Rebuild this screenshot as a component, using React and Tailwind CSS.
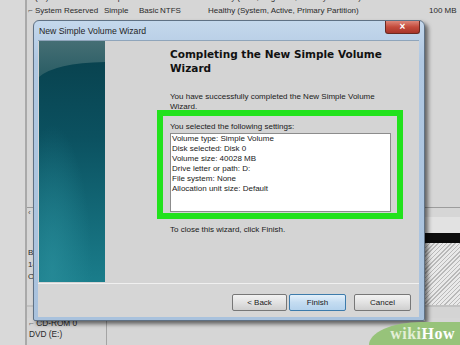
import React from 'react';

const settings = [
  'Volume type: Simple Volume',
  'Disk selected: Disk 0',
  'Volume size: 40028 MB',
  'Drive letter or path: D:',
  'File system: None',
  'Allocation unit size: Default',
];

const TealPanel = () => (
  <svg className="block" width="66" height="241" viewBox="0 0 66 241" preserveAspectRatio="none">
    <defs>
      <linearGradient id="tealG" x1="0" y1="0" x2="0" y2="1">
        <stop offset="0" stopColor="#083f4b" />
        <stop offset="0.4" stopColor="#0b5160" />
        <stop offset="1" stopColor="#1a7d8b" />
      </linearGradient>
      <linearGradient id="topG" x1="0" y1="0" x2="0" y2="1">
        <stop offset="0" stopColor="#456e74" />
        <stop offset="1" stopColor="#295c64" />
      </linearGradient>
      <radialGradient id="glowG" cx="0.2" cy="0.95" r="0.6">
        <stop offset="0" stopColor="#2a8e9b" stopOpacity="0.7" />
        <stop offset="1" stopColor="#2a8e9b" stopOpacity="0" />
      </radialGradient>
    </defs>
    <rect width="66" height="241" fill="url(#tealG)" />
    <rect width="66" height="241" fill="url(#glowG)" />
    <path d="M0 36 Q16 22 66 21 L66 0 L0 0Z" fill="url(#topG)" />
  </svg>
);

const WinButton = ({ children, primary, className = '' }) => (
  <div
    className={`h-[17px] flex items-center justify-center rounded-[2px] border text-[8px] leading-none text-[#1a1a1a] ${
      primary
        ? 'border-[#3d7bab] bg-[linear-gradient(#e3f0fb,#c4dcf1_50%,#b4d2ec)]'
        : 'border-[#777777] bg-[linear-gradient(#f2f2f2,#e2e2e2_50%,#cfcfcf)]'
    } ${className}`}
  >
    {children}
  </div>
);

export default function App() {
  return (
    <div className="relative w-[460px] h-[345px] overflow-hidden flex bg-[#d6d6d6] text-[#2a2a2a] font-['Liberation_Sans',Arial,sans-serif]">
      {/* left strip of the window behind */}
      <div className="w-[27px] shrink-0 bg-[#d9d9d9] border-r-2 border-[#a9a9a9]" />

      {/* disk management behind the dialog */}
      <div className="flex-1 flex flex-col">
        <div className="h-[3px] shrink-0 overflow-hidden">
          <div className="-mt-[8px] flex whitespace-nowrap text-[8px] leading-[11px] pl-[8px]">
            <span className="w-[69px] shrink-0">(C:)</span>
            <span className="w-[35px] shrink-0">Simple</span>
            <span className="w-[21px] shrink-0">Basic</span>
            <span className="w-[48px] shrink-0">NTFS</span>
            <span className="w-[221px] shrink-0">Healthy (Boot, Page File, Primary Partition)</span>
            <span className="shrink-0">39 GB</span>
          </div>
        </div>
        <div className="h-[15px] shrink-0 flex items-center whitespace-nowrap text-[8px] leading-none">
          <span className="w-[8px] shrink-0 pl-[1px] text-[#777777]">⌐</span>
          <span className="w-[69px] shrink-0">System Reserved</span>
          <span className="w-[35px] shrink-0">Simple</span>
          <span className="w-[21px] shrink-0">Basic</span>
          <span className="w-[48px] shrink-0">NTFS</span>
          <span className="w-[221px] shrink-0">Healthy (System, Active, Primary Partition)</span>
          <span className="shrink-0">100 MB</span>
        </div>
        <div className="flex-1" />
        <div className="h-[10px] shrink-0 border-t border-[#9c9c9c] flex items-center pl-[1px] text-[8px] leading-none text-[#555555]">‹</div>
        <div className="h-[88px] shrink-0 flex">
          <div className="w-[79px] flex flex-col pt-[30px] pl-[1px] text-[8px] leading-[12px] whitespace-nowrap">
            <span>Basic</span>
            <span>14.65 GB</span>
            <span>Online</span>
          </div>
          <div className="flex-1 flex flex-col border-l border-[#9c9c9c]">
            <div className="h-[16px] bg-[#e2e2e2]" />
            <div className="h-[10px] bg-[#0c0c0c]" />
            <div className="flex-1 bg-[repeating-linear-gradient(135deg,#b9b9b9_0px,#b9b9b9_1px,#e9e9e9_1px,#e9e9e9_3px)]" />
          </div>
        </div>
        <div className="h-[13px] shrink-0 border-t-2 border-[#c2c2c2] bg-[#d4d4d4]" />
        <div className="h-[27px] shrink-0 flex">
          <div className="w-[79px] flex flex-col pl-[2px] text-[8.3px] leading-[11px] whitespace-nowrap">
            <span>
              <span className="text-[#777777]">⌐</span> CD-ROM 0
            </span>
            <span>DVD (E:)</span>
          </div>
          <div className="flex-1 border-l border-[#a4a4a4]" />
        </div>
      </div>

      {/* wizard window */}
      <div className="absolute left-[33px] top-[20px] w-[392px] h-[301px] flex flex-col rounded-t-[6px] rounded-b-[2px] border border-[#5f7184] bg-[linear-gradient(#c4d8ec,#b0c8e2_40px,#a9c2dd)] shadow-[3px_3px_4px_rgba(0,0,0,0.55)]">
        <div className="h-[19px] shrink-0 flex items-start justify-between">
          <span className="pl-[5px] pt-[5px] text-[8.7px] leading-[10px] text-[#1f1f1f]">New Simple Volume Wizard</span>
          <div className="mr-[4px] w-[35px] h-[13px] rounded-b-[3px] border border-t-0 border-[#6a2a22] bg-[linear-gradient(#de8679,#c44b3c_50%,#a8352a)] flex items-center justify-center text-white text-[10px] font-bold leading-none">
            ×
          </div>
        </div>

        <div className="flex-1 ml-[4px] mr-[5px] mb-[3px] flex flex-col bg-[#d4d4d4] border-t border-[#8fa5bb]">
          <div className="h-[242px] flex">
            <div className="ml-[1px] shrink-0">
              <TealPanel />
            </div>
            <div className="flex-1 flex flex-col pl-[65px] pr-[28px] pt-[6px]">
              <h1 className="text-[10.5px] leading-[14px] font-bold text-[#111111] font-['DejaVu_Sans',Verdana,sans-serif]">
                Completing the New Simple Volume Wizard
              </h1>
              <p className="mt-[17px] text-[8px] leading-[10px] text-[#1a1a1a]">
                You have successfully completed the New Simple Volume Wizard.
              </p>
              <div className="-mt-[2px] -ml-[13px] -mr-[12px] border-[6px] border-[#22e21c] pl-[7px] pr-[6px] pt-[6px] pb-[1px]">
                <div className="text-[8px] leading-[10px] text-[#1a1a1a]">You selected the following settings:</div>
                <div className="mt-[1px] h-[79px] border border-[#8c8c8c] bg-white pl-[1px] text-[8px] leading-[10px] text-[#1a1a1a]">
                  {settings.map((s) => (
                    <div key={s}>{s}</div>
                  ))}
                </div>
              </div>
              <p className="mt-[6px] text-[8px] leading-[10px] text-[#1a1a1a]">To close this wizard, click Finish.</p>
            </div>
          </div>

          <div className="flex-1 flex items-start justify-end pt-[10px] pr-[8px] border-t border-[#f0f0f0] bg-[#d6d6d6]">
            <WinButton className="w-[55px]">&lt; Back</WinButton>
            <WinButton primary className="ml-[2px] w-[57px]">Finish</WinButton>
            <WinButton className="ml-[8px] w-[57px]">Cancel</WinButton>
          </div>
        </div>
      </div>

      {/* watermark */}
      <div className="absolute right-0 bottom-0 w-[91px] h-[23px] rounded-tl-[52px_23px] bg-[#97c37a] flex items-end justify-end pr-[5px] pb-[1px] font-['Liberation_Serif',serif] font-bold text-[16px] leading-[20px] tracking-[0.5px]">
        <span className="text-[#e3efd6]">wiki</span>
        <span className="text-white">How</span>
      </div>
    </div>
  );
}
